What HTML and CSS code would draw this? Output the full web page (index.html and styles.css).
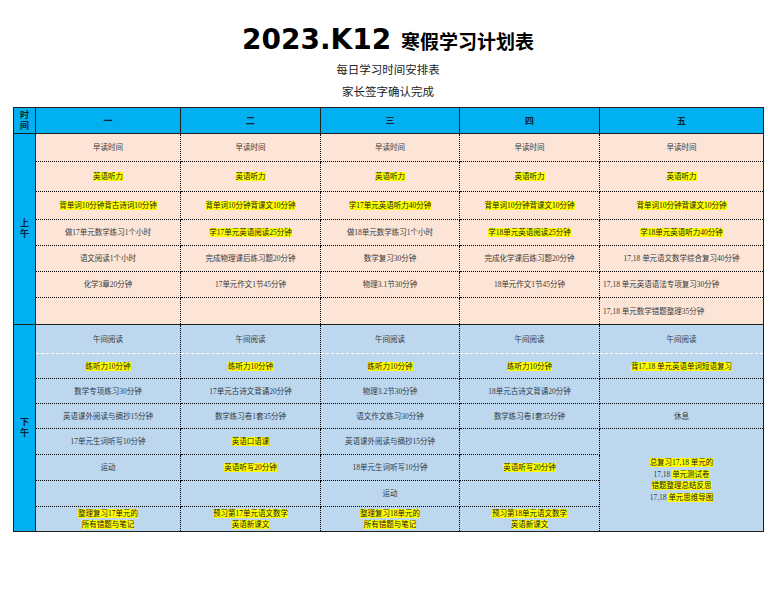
FILE: index.html
```html
<!DOCTYPE html>
<html lang="zh-CN">
<head>
<meta charset="utf-8">
<title>2023.K12 寒假学习计划表</title>
<link rel="stylesheet" href="styles.css">
</head>
<body>
<div class="page">
  <header class="head">
    <h1 class="title">2023.K12 <span class="title-cjk">寒假学习计划表</span></h1>
    <p class="sub">每日学习时间安排表</p>
    <p class="sub">家长签字确认完成</p>
  </header>
  <table class="plan">
    <colgroup>
      <col class="c-lab"><col class="c1"><col class="c2"><col class="c3"><col class="c4"><col class="c5">
    </colgroup>
    <thead>
      <tr class="hr">
        <th class="corner"><span class="vert">时间</span></th>
        <th>一</th><th>二</th><th>三</th><th>四</th><th>五</th>
      </tr>
    </thead>
    <tbody class="am">
      <tr class="h28">
        <th class="lab" rowspan="7"><span class="vert">上午</span></th>
        <td>早读时间</td><td>早读时间</td><td>早读时间</td><td>早读时间</td><td>早读时间</td>
      </tr>
      <tr class="h30">
        <td><span class="hl">英语听力</span></td><td><span class="hl">英语听力</span></td><td><span class="hl">英语听力</span></td><td><span class="hl">英语听力</span></td><td><span class="hl">英语听力</span></td>
      </tr>
      <tr class="h28">
        <td><span class="hl">背单词10分钟背古诗词10分钟</span></td>
        <td><span class="hl">背单词10分钟背课文10分钟</span></td>
        <td><span class="hl">学17单元英语听力40分钟</span></td>
        <td><span class="hl">背单词10分钟背课文10分钟</span></td>
        <td><span class="hl">背单词10分钟背课文10分钟</span></td>
      </tr>
      <tr class="h26">
        <td>做17单元数学练习1个小时</td>
        <td><span class="hl">学17单元英语阅读25分钟</span></td>
        <td>做18单元数学练习1个小时</td>
        <td><span class="hl">学18单元英语阅读25分钟</span></td>
        <td><span class="hl">学18单元英语听力40分钟</span></td>
      </tr>
      <tr class="h26">
        <td>语文阅读1个小时</td>
        <td>完成物理课后练习题20分钟</td>
        <td>数学复习30分钟</td>
        <td>完成化学课后练习题20分钟</td>
        <td>17,18 单元语文数学综合复习40分钟</td>
      </tr>
      <tr class="h26">
        <td>化学3章20分钟</td>
        <td>17单元作文1节45分钟</td>
        <td>物理3.1节30分钟</td>
        <td>18单元作文1节45分钟</td>
        <td class="left">17,18 单元英语语法专项复习30分钟</td>
      </tr>
      <tr class="h27">
        <td></td><td></td><td></td><td></td>
        <td class="left">17,18 单元数学错题整理35分钟</td>
      </tr>
    </tbody>
    <tbody class="pm">
      <tr class="h29 first">
        <th class="lab" rowspan="8"><span class="vert">下午</span></th>
        <td>午间阅读</td><td>午间阅读</td><td>午间阅读</td><td>午间阅读</td><td>午间阅读</td>
      </tr>
      <tr class="h25">
        <td><span class="hl">练听力10分钟</span></td>
        <td><span class="hl">练听力10分钟</span></td>
        <td><span class="hl">练听力10分钟</span></td>
        <td><span class="hl">练听力10分钟</span></td>
        <td><span class="hl">背17,18 单元英语单词短语复习</span></td>
      </tr>
      <tr class="h25">
        <td>数学专项练习30分钟</td>
        <td>17单元古诗文背诵20分钟</td>
        <td>物理3.2节30分钟</td>
        <td>18单元古诗文背诵20分钟</td>
        <td></td>
      </tr>
      <tr class="h25">
        <td>英语课外阅读与摘抄15分钟</td>
        <td>数学练习卷1套35分钟</td>
        <td>语文作文练习30分钟</td>
        <td>数学练习卷1套35分钟</td>
        <td>休息</td>
      </tr>
      <tr class="h26">
        <td>17单元生词听写10分钟</td>
        <td><span class="hl">英语口语课</span></td>
        <td>英语课外阅读与摘抄15分钟</td>
        <td></td>
        <td class="ml merged" rowspan="4">
          <span class="hl">总复习17,18 单元的</span><br>
          17,18 <span class="hl">单元测试卷</span><br>
          <span class="hl">错题整理总结反思</span><br>
          17,18 <span class="hl">单元思维导图</span>
        </td>
      </tr>
      <tr class="h26">
        <td>运动</td>
        <td><span class="hl">英语听写20分钟</span></td>
        <td>18单元生词听写10分钟</td>
        <td><span class="hl">英语听写20分钟</span></td>
      </tr>
      <tr class="h26">
        <td></td><td></td><td>运动</td><td></td>
      </tr>
      <tr class="h25">
        <td class="ml"><span class="hl">整理复习17单元的</span><br><span class="hl">所有错题与笔记</span></td>
        <td class="ml"><span class="hl">预习第17单元语文数学</span><br><span class="hl">英语新课文</span></td>
        <td class="ml"><span class="hl">整理复习18单元的</span><br><span class="hl">所有错题与笔记</span></td>
        <td class="ml"><span class="hl">预习第18单元语文数学</span><br><span class="hl">英语新课文</span></td>
      </tr>
    </tbody>
  </table>
</div>
</body>
</html>
```

FILE: styles.css
```css
* { box-sizing: border-box; }
html, body { margin: 0; padding: 0; background: #ffffff; }
body {
  font-family: "DejaVu Sans", "Noto Sans CJK SC", sans-serif;
  color: #111;
}
.page { padding: 0 5px 0 13px; }

.head { text-align: center; padding-top: 25px; height: 107px; }
.title {
  margin: 0;
  font-size: 28px;
  line-height: 30px;
  font-weight: bold;
  color: #000;
}
.title-cjk { font-size: 19px; }
.sub {
  margin: 0;
  font-size: 11.5px;
  line-height: 22px;
  color: #222;
}
.sub:first-of-type { margin-top: 2px; }

.plan {
  width: 750px;
  border-collapse: collapse;
  table-layout: fixed;
  border: 1px solid #1e1e1e;
  font-family: "Liberation Serif", "Noto Sans CJK SC", serif;
  font-size: 7.5px;
}
.c-lab { width: 22px; }
.c1 { width: 145px; }
.c2 { width: 140px; }
.c3 { width: 139px; }
.c4 { width: 140px; }
.c5 { width: 164px; }

.plan th {
  background: #00b0f0;
  border: 1px solid #1e1e1e;
  color: #0b2233;
  font-family: "DejaVu Sans", "Noto Sans CJK SC", sans-serif;
  font-size: 9px;
  font-weight: bold;
  padding: 0;
  text-align: center;
  vertical-align: middle;
}
.hr { height: 26px; }
.corner { font-size: 8px; }
.vert { display: inline-block; width: 1em; line-height: 1.2; white-space: normal; }
.lab { font-size: 10px; }

.plan td {
  border: 1px dotted #000;
  text-align: center;
  vertical-align: middle;
  padding: 0 2px;
  white-space: nowrap;
  line-height: 1.2;
}
.am td { background: #fce4d6; color: #3a3a3a; }
.pm td { background: #bdd7ee; color: #2f3b4a; }
.pm .first td { border-top: 1px solid #1e1e1e; border-bottom: 1px dashed #ffffff; }

.plan td.left { text-align: left; padding-left: 3px; }
.plan td.ml { line-height: 11px; }
.plan td.merged { line-height: 11.5px; }

.hl { background: #ffff00; color: #1a1a1a; }

.h25 { height: 25px; }
.h26 { height: 26px; }
.h27 { height: 27px; }
.h28 { height: 28px; }
.h29 { height: 29px; }
.h30 { height: 30px; }
```
